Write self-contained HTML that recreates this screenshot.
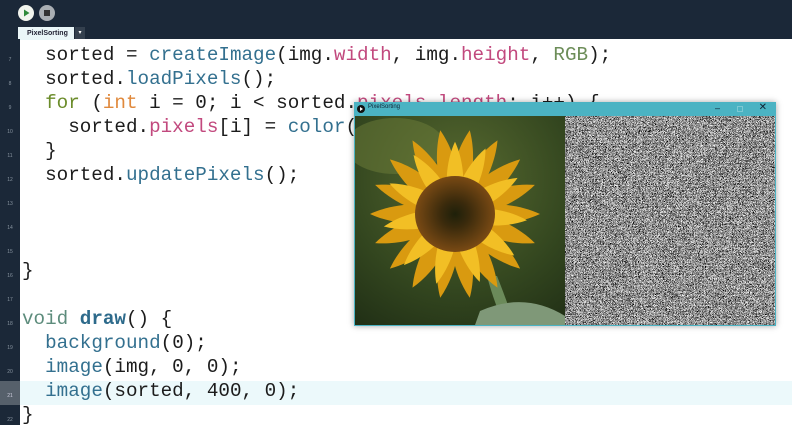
<!DOCTYPE html>
<html><head><style>
*{margin:0;padding:0;box-sizing:border-box}
body{width:792px;height:425px;overflow:hidden;background:#fff;position:relative;font-family:"Liberation Mono",monospace}
#top{position:absolute;left:0;top:0;width:792px;height:39px;background:#1b2838}
.btn{position:absolute;top:5px;width:16px;height:16px;border-radius:50%}
#tab{position:absolute;left:18px;top:27px;width:56px;height:13px;background:#eaf6f8;font:bold 7px "Liberation Sans",sans-serif;color:#223;padding:3px 0 0 9px}
#tabd{position:absolute;left:75px;top:27px;width:10px;height:12px;background:#34404e;color:#fff;font-size:6px;text-align:center;line-height:12px}
#gut{position:absolute;left:0;top:39px;width:20px;height:386px;background:#1b2838}
.ln{position:absolute;left:0;width:20px;font:5px "Liberation Sans",sans-serif;color:#8894a0;text-align:center}
#hl{position:absolute;left:20px;top:381px;width:772px;height:24px;background:#ecf9fb}
#hlg{position:absolute;left:0;top:381px;width:20px;height:24px;background:#56606b}
pre{position:absolute;left:22px;top:43px;font-size:19.25px;line-height:24px;color:#1c1c1c;font-family:"Liberation Mono",monospace}
.b{color:#33708f}.p{color:#c2497e}.g{color:#6c8d58}.o{color:#6b8c2a}.n{color:#e0893c}.v{color:#5d8c7c}.d{color:#2d6a8b;font-weight:bold}
#win{position:absolute;left:354px;top:102px;width:422px;height:224px;background:#4bb3c3;box-shadow:0 0 6px rgba(0,0,0,.35)}
#tt{position:absolute;left:14px;top:2px;font:6px "Liberation Sans",sans-serif;color:#123}
</style></head><body>
<div id="top">
<div class="btn" style="left:18px;background:#f2f5ee"><svg width="16" height="16"><path d="M6 4.5L11.5 8 6 11.5Z" fill="#2f8a3a"/></svg></div>
<div class="btn" style="left:39px;background:#a9aeb3"><div style="position:absolute;left:5px;top:5px;width:6px;height:6px;background:#333"></div></div>
</div>
<div id="tab">PixelSorting</div><div id="tabd">▾</div>
<div id="gut"></div>
<div id="hl"></div><div id="hlg"></div>
<div class="ln" style="top:57px">7</div><div class="ln" style="top:81px">8</div><div class="ln" style="top:105px">9</div><div class="ln" style="top:129px">10</div><div class="ln" style="top:153px">11</div><div class="ln" style="top:177px">12</div><div class="ln" style="top:201px">13</div><div class="ln" style="top:225px">14</div><div class="ln" style="top:249px">15</div><div class="ln" style="top:273px">16</div><div class="ln" style="top:297px">17</div><div class="ln" style="top:321px">18</div><div class="ln" style="top:345px">19</div><div class="ln" style="top:369px">20</div><div class="ln" style="top:393px;color:#ccd">21</div><div class="ln" style="top:417px">22</div>
<pre>  sorted = <span class="b">createImage</span>(img.<span class="p">width</span>, img.<span class="p">height</span>, <span class="g">RGB</span>);
  sorted.<span class="b">loadPixels</span>();
  <span class="o">for</span> (<span class="n">int</span> i = 0; i &lt; sorted.<span class="p">pixels</span>.<span class="p">length</span>; i++) {
    sorted.<span class="p">pixels</span>[i] = <span class="b">color</span>(<span class="b">random</span>(255));
  }
  sorted.<span class="b">updatePixels</span>();



}

<span class="v">void</span> <span class="d">draw</span>() {
  <span class="b">background</span>(0);
  <span class="b">image</span>(img, 0, 0);
  <span class="b">image</span>(sorted, 400, 0);
}</pre>
<div id="win">
<svg style="position:absolute;left:3px;top:3px" width="8" height="8"><circle cx="4" cy="4" r="4" fill="#111"/><path d="M3 2L6 4 3 6Z" fill="#fff"/></svg>
<div id="tt">PixelSorting</div>
<div style="position:absolute;right:56px;top:1px;font:9px 'Liberation Sans';color:#123">–</div>
<div style="position:absolute;right:33px;top:4px;width:6px;height:6px;border:1px solid #7cc8d3"></div>
<div style="position:absolute;right:9px;top:0px;font:10px 'Liberation Sans';color:#123">✕</div>
<svg style="position:absolute;left:1px;top:14px" width="420" height="209">
<defs>
<filter id="nz2" x="0" y="0" width="100%" height="100%"><feTurbulence type="turbulence" baseFrequency="1.3" numOctaves="1" seed="5"/><feColorMatrix type="matrix" values="3 0 0 0 -0.1 3 0 0 0 -0.1 3 0 0 0 -0.1 0 0 0 0 1"/><feColorMatrix type="saturate" values="0"/></filter>
<radialGradient id="bg" cx="0.5" cy="0.3" r="0.9"><stop offset="0" stop-color="#586a30"/><stop offset="0.6" stop-color="#33461f"/><stop offset="1" stop-color="#1e2c14"/></radialGradient>
<radialGradient id="ctr" cx="0.5" cy="0.5" r="0.5"><stop offset="0" stop-color="#1e200a"/><stop offset="0.35" stop-color="#3a2a0c"/><stop offset="1" stop-color="#7a4a14"/></radialGradient>
<g id="pt"><path d="M0 0C12 -14 14 -55 0 -85C-14 -55 -12 -14 0 0Z"/></g>
</defs>
<rect width="210" height="209" fill="url(#bg)"/>
<ellipse cx="40" cy="30" rx="50" ry="28" fill="#6e7e3a" opacity=".5"/>
<path d="M132 160 Q140 190 150 209 L160 209 Q150 180 142 160Z" fill="#6b8a5a"/>
<path d="M125 195 Q170 175 210 200 L210 209 L120 209Z" fill="#7f9878"/>
<g transform="translate(100,98)">
<g fill="#d99a10">
<use href="#pt" transform="rotate(10)"/><use href="#pt" transform="rotate(30)"/><use href="#pt" transform="rotate(50)"/><use href="#pt" transform="rotate(70)"/><use href="#pt" transform="rotate(90)"/><use href="#pt" transform="rotate(110)"/><use href="#pt" transform="rotate(130)"/><use href="#pt" transform="rotate(150)"/><use href="#pt" transform="rotate(170)"/><use href="#pt" transform="rotate(190)"/><use href="#pt" transform="rotate(210)"/><use href="#pt" transform="rotate(230)"/><use href="#pt" transform="rotate(250)"/><use href="#pt" transform="rotate(270)"/><use href="#pt" transform="rotate(290)"/><use href="#pt" transform="rotate(310)"/><use href="#pt" transform="rotate(330)"/><use href="#pt" transform="rotate(350)"/>
</g>
<g fill="#f2bf25">
<use href="#pt" transform="rotate(0) scale(.85)"/><use href="#pt" transform="rotate(25) scale(.85)"/><use href="#pt" transform="rotate(60) scale(.85)"/><use href="#pt" transform="rotate(95) scale(.85)"/><use href="#pt" transform="rotate(125) scale(.85)"/><use href="#pt" transform="rotate(160) scale(.85)"/><use href="#pt" transform="rotate(195) scale(.85)"/><use href="#pt" transform="rotate(225) scale(.85)"/><use href="#pt" transform="rotate(260) scale(.85)"/><use href="#pt" transform="rotate(295) scale(.85)"/><use href="#pt" transform="rotate(325) scale(.85)"/>
</g>
<ellipse cx="0" cy="0" rx="40" ry="38" fill="url(#ctr)"/>
</g>
<rect x="210" width="210" height="209" fill="#808080"/>
<rect x="210" width="210" height="209" filter="url(#nz2)"/>
</svg>
</div>
</body></html>
